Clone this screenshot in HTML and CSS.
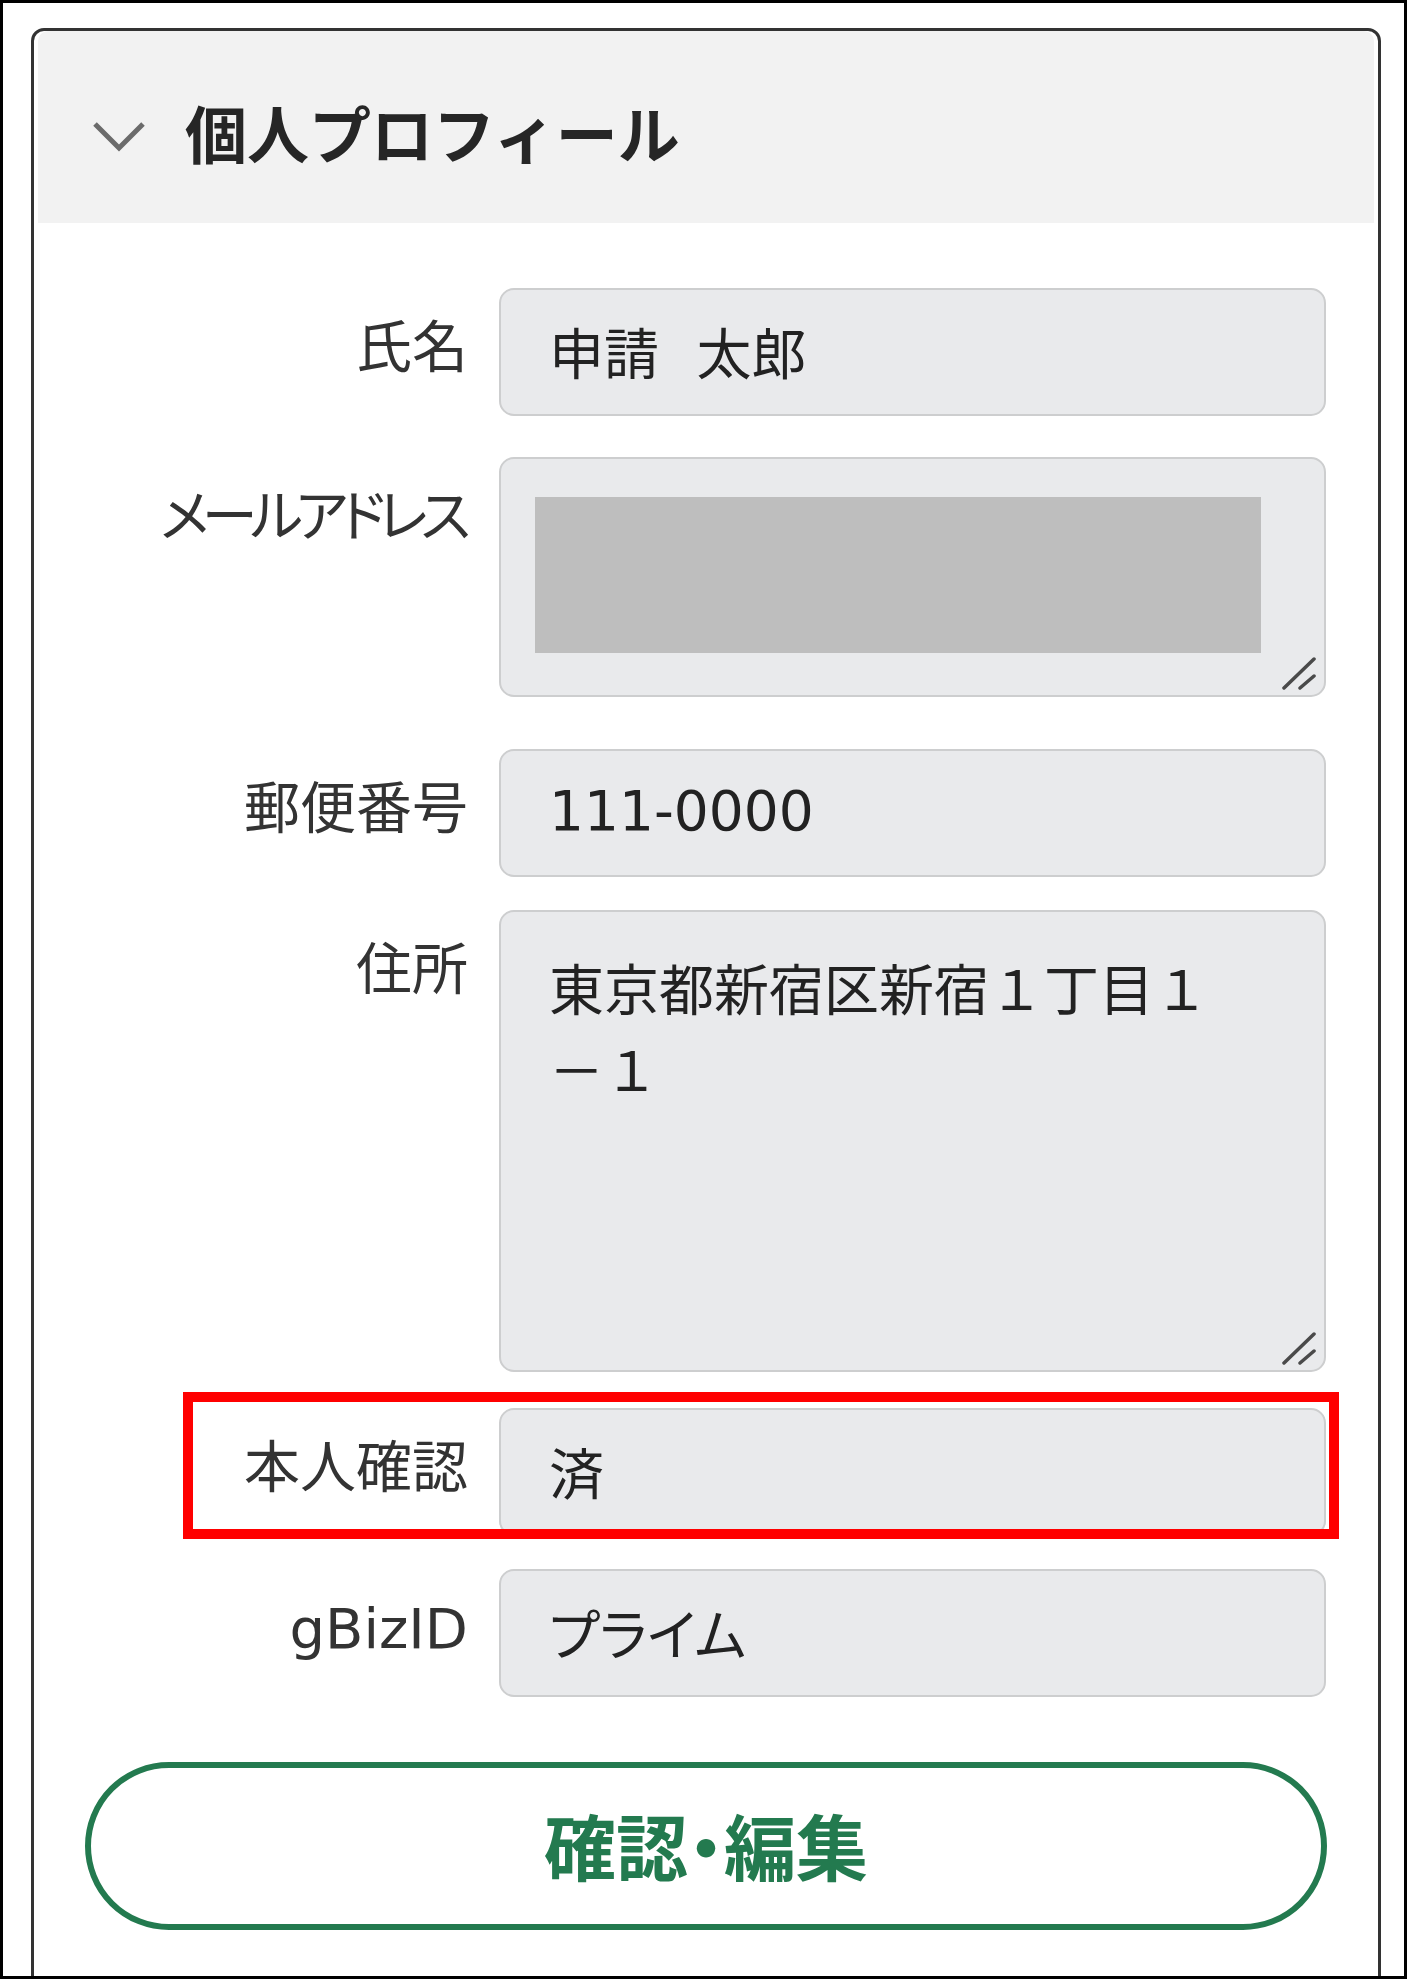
FILE: index.html
```html
<!DOCTYPE html>
<html lang="ja">
<head>
<meta charset="utf-8">
<title>個人プロフィール</title>
<link rel="stylesheet" href="styles.css">
</head>
<body>
<div class="frame">
  <section class="card">
    <header class="card-header">
      <svg class="chevron" width="54" height="32" viewBox="0 0 54 32" aria-hidden="true">
        <polyline points="3,4 27,28 51,4" fill="none" stroke="#6b6b6b" stroke-width="5"/>
      </svg>
      <h1 class="title">個人プロフィール</h1>
    </header>

    <div class="form">
      <div class="row row-name">
        <div class="label">氏名</div>
        <div class="field field-single value-spaced">申請 太郎</div>
      </div>

      <div class="row row-mail">
        <div class="label label-kana">メールアドレス</div>
        <div class="field field-mail">
          <div class="redact"></div>
          <svg class="grip" width="34" height="34" viewBox="0 0 34 34" aria-hidden="true">
            <line x1="2" y1="32" x2="32" y2="3" stroke="#4a4a4a" stroke-width="3.5" stroke-linecap="round"/>
            <line x1="18" y1="32" x2="32" y2="20" stroke="#4a4a4a" stroke-width="3.5" stroke-linecap="round"/>
          </svg>
        </div>
      </div>

      <div class="row row-zip">
        <div class="label">郵便番号</div>
        <div class="field field-single">111-0000</div>
      </div>

      <div class="row">
        <div class="label">住所</div>
        <div class="field field-address">東京都新宿区新宿１丁目１<br>－１
          <svg class="grip" width="34" height="34" viewBox="0 0 34 34" aria-hidden="true">
            <line x1="2" y1="32" x2="32" y2="3" stroke="#4a4a4a" stroke-width="3.5" stroke-linecap="round"/>
            <line x1="18" y1="32" x2="32" y2="20" stroke="#4a4a4a" stroke-width="3.5" stroke-linecap="round"/>
          </svg>
        </div>
      </div>

      <div class="row row-check highlighted">
        <div class="label">本人確認</div>
        <div class="field field-single">済</div>
      </div>

      <div class="row row-gbiz">
        <div class="label">gBizID</div>
        <div class="field field-single">プライム</div>
      </div>

      <button class="edit-button" type="button">確認・編集</button>
    </div>
  </section>
</div>
</body>
</html>
```

FILE: styles.css
```css
html, body {
  margin: 0;
  padding: 0;
  background: #ffffff;
}

.frame {
  box-sizing: border-box;
  width: 1407px;
  height: 1979px;
  border: 3px solid #000000;
  padding: 25px 23px 0 28px;
  overflow: hidden;
  background: #ffffff;
}

.card {
  box-sizing: border-box;
  border: 3px solid #333333;
  border-radius: 13px;
  height: 2100px;
  background: #ffffff;
}

.card-header {
  box-sizing: border-box;
  height: 192px;
  margin: 0 4px;
  padding: 10px 0 0 54px;
  background: #f2f2f2;
  border-radius: 10px 10px 0 0;
  display: flex;
  align-items: center;
}

.chevron {
  flex: none;
  margin-right: 39px;
  margin-top: 8px;
}

.title {
  margin: 0;
  font-family: "Noto Sans CJK JP", sans-serif;
  font-weight: 700;
  font-size: 62px;
  line-height: 1;
  color: #262626;
}

.form {
  padding-top: 65px;
}

.row {
  position: relative;
  display: grid;
  grid-template-columns: 434px 827px;
  column-gap: 31px;
  align-items: start;
  margin-bottom: 36px;
}

.row-name { margin-bottom: 41px; }
.row-mail { margin-bottom: 52px; }
.row-zip { margin-bottom: 33px; }
.row-check { margin-bottom: 33px; }
.row-gbiz { margin-bottom: 65px; }

.label {
  font-family: "DejaVu Sans", "Noto Sans CJK JP", sans-serif;
  font-feature-settings: "palt";
  font-size: 56px;
  line-height: 120px;
  text-align: right;
  color: #333333;
  white-space: nowrap;
}

.label-kana {
  letter-spacing: -7px;
  padding-right: 4px;
}

.field {
  position: relative;
  box-sizing: border-box;
  border: 2px solid #cdcecf;
  border-radius: 15px;
  background: #e9eaec;
  font-family: "DejaVu Sans", "Noto Sans CJK JP", sans-serif;
  font-feature-settings: "palt";
  font-size: 55px;
  color: #222222;
}

.field-single {
  height: 128px;
  display: flex;
  align-items: center;
  padding: 0 0 4px 48px;
  white-space: pre;
}

.value-spaced {
  word-spacing: 20px;
}

.field-mail {
  height: 240px;
  padding: 38px 0 0 34px;
}

.redact {
  width: 726px;
  height: 156px;
  background: #bebebe;
}

.field-address {
  height: 462px;
  padding: 39px 60px 0 48px;
  line-height: 81px;
  font-feature-settings: normal;
}

.grip {
  position: absolute;
  right: 8px;
  bottom: 5px;
}

.highlighted::after {
  content: "";
  position: absolute;
  top: -16px;
  bottom: -3px;
  left: 149px;
  right: 39px;
  border: 10px solid #ff0000;
  pointer-events: none;
}

.edit-button {
  display: block;
  box-sizing: border-box;
  width: calc(100% - 102px);
  height: 168px;
  margin: 0 51px;
  border: 6px solid #237a4f;
  border-radius: 84px;
  background: #ffffff;
  font-family: "Noto Sans CJK JP", sans-serif;
  font-feature-settings: "palt";
  font-weight: 700;
  font-size: 72px;
  line-height: 1;
  color: #237a4f;
  padding: 0 0 4px;
}
```
